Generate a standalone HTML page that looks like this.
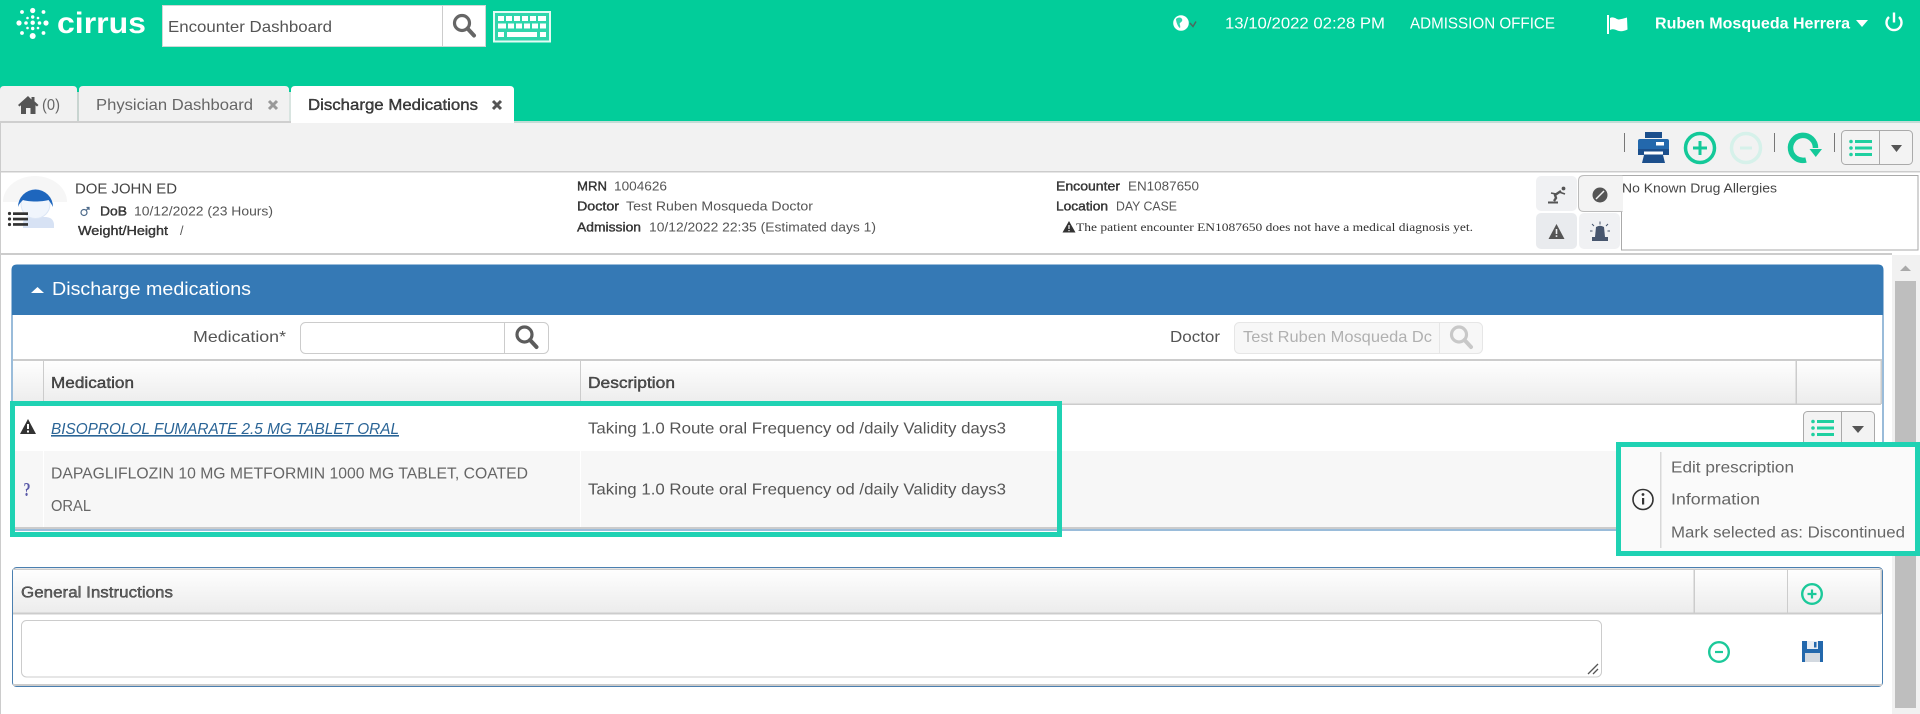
<!DOCTYPE html>
<html lang="en">
<head>
<meta charset="utf-8">
<title>Discharge Medications</title>
<style>
html,body{margin:0;padding:0;width:1920px;height:714px;overflow:hidden;background:#fff}
svg{display:block;font-family:"Liberation Sans",sans-serif}
.sb{stroke:currentColor;stroke-width:.3px}
</style>
</head>
<body>
<svg width="1920" height="714" viewBox="0 0 1920 714" xmlns="http://www.w3.org/2000/svg">
<defs>
<linearGradient id="hd" x1="0" y1="0" x2="0" y2="1"><stop offset="0" stop-color="#fefefe"/><stop offset="1" stop-color="#ececec"/></linearGradient>
<g id="lst"><circle cx="-11" cy="-6.5" r="1.8"/><circle cx="-11" cy="0" r="1.8"/><circle cx="-11" cy="6.5" r="1.8"/><rect x="-7" y="-8" width="17" height="3"/><rect x="-7" y="-1.500" width="17" height="3"/><rect x="-7" y="5" width="17" height="3"/></g>
<g id="mag" fill="none" stroke-width="3.2"><circle cx="-2" cy="-2.500" r="7.500"/><path d="M3.500 3 L10 10" stroke-width="4" stroke-linecap="round"/></g>
</defs>

<!-- header -->
<rect width="1920" height="121" fill="#02cd9a"/>
<g fill="#fff">
<circle cx="32.700" cy="22.700" r="2.200"/>
<circle cx="32.700" cy="10.500" r="2.600"/><circle cx="32.700" cy="17" r="1.700"/><circle cx="32.700" cy="28.500" r="1.700"/><circle cx="32.700" cy="36" r="3"/>
<circle cx="19" cy="23" r="2.600"/><circle cx="26" cy="23" r="1.800"/><circle cx="39.500" cy="23" r="1.800"/><circle cx="46" cy="23" r="2.600"/>
<circle cx="22" cy="12" r="1.900"/><circle cx="27.500" cy="18" r="1.300"/><circle cx="43.500" cy="12" r="1.900"/><circle cx="38" cy="18" r="1.300"/>
<circle cx="22" cy="33" r="1.900"/><circle cx="27.500" cy="28" r="1.300"/><circle cx="43.500" cy="33" r="1.900"/><circle cx="38" cy="28" r="1.300"/>
<text x="57" y="33" font-size="30" font-weight="bold" textLength="89" lengthAdjust="spacingAndGlyphs">cirrus</text>
</g>
<rect x="162.500" y="5.500" width="323" height="41" fill="#fff" stroke="#cfd8d5"/>
<line x1="442.500" y1="6" x2="442.500" y2="46" stroke="#ccc"/>
<text x="168" y="32" font-size="16" fill="#555" textLength="164" lengthAdjust="spacingAndGlyphs">Encounter Dashboard</text>
<use href="#mag" x="464" y="25.500" stroke="#666"/>
<rect x="494" y="12" width="56" height="29.500" fill="#2fd6ac" stroke="#e3fbf4" stroke-width="2"/>
<g fill="#fff">
<rect x="498" y="16" width="6" height="5"/><rect x="506" y="16" width="6" height="5"/><rect x="514" y="16" width="6" height="5"/><rect x="522" y="16" width="6" height="5"/><rect x="530" y="16" width="6" height="5"/><rect x="538" y="16" width="8" height="5"/>
<rect x="498" y="23.500" width="8" height="5"/><rect x="508" y="23.500" width="6" height="5"/><rect x="516" y="23.500" width="6" height="5"/><rect x="524" y="23.500" width="6" height="5"/><rect x="532" y="23.500" width="6" height="5"/><rect x="540" y="23.500" width="6" height="5"/>
<rect x="498" y="32" width="6" height="5"/><rect x="507" y="32" width="30" height="5"/><rect x="540" y="32" width="6" height="5"/>
</g>
<!-- globe -->
<circle cx="1181" cy="23" r="7.800" fill="#fff"/>
<path d="M1176 19c2-2 5-2 6 0s-1 3-2 4 1 3 0 5c-2-1-4-6-4-9z" fill="#2fd6ac"/>
<path d="M1190 23l3 3.500 3-5" fill="none" stroke="#4a6b60" stroke-width="1.500"/>
<g fill="#fff" font-size="15.500">
<text x="1225" y="28.500" textLength="160" lengthAdjust="spacingAndGlyphs">13/10/2022 02:28 PM</text>
<text x="1410" y="28.500" textLength="145" lengthAdjust="spacingAndGlyphs">ADMISSION OFFICE</text>
<text x="1655" y="28.500" font-weight="bold" textLength="195" lengthAdjust="spacingAndGlyphs">Ruben Mosqueda Herrera</text>
</g>
<rect x="1607" y="15" width="2" height="19" fill="#fff"/>
<path d="M1610 18c4-2 7 2 9 1.500s5-1 8-2l.5 12c-3 1.500-6 2-8.500 1.500s-5-3-9-1z" fill="#fff"/>
<path d="M1856 20h12l-6 7z" fill="#fff"/>
<path d="M1889 17a7.500 7.500 0 1 0 10 0" fill="none" stroke="#fff" stroke-width="2.400"/>
<rect x="1892.800" y="12.500" width="2.400" height="10" fill="#fff"/>

<!-- tabs -->
<rect x="76" y="92" width="4" height="30" fill="#c8d4d0"/>
<rect x="288" y="92" width="4" height="30" fill="#d8e4e0"/>
<path d="M0 122V90q0-4 4-4h69q4 0 4 4v32z" fill="#f1f1f1"/>
<path d="M79 122V90q0-4 4-4h202q4 0 4 4v32z" fill="#f1f1f1"/>
<path d="M291 122V90q0-4 4-4h215q4 0 4 4v32z" fill="#fff"/>
<path d="M28 96L18 105l1.500 1.500 1.500-1.300V114h5v-6h4.500v6h5v-8.800l1.500 1.300 1.500-1.500-4-3.800V97h-3v2.500z" fill="#555"/>
<text x="42" y="110" font-size="16" fill="#666" textLength="18" lengthAdjust="spacingAndGlyphs">(0)</text>
<text x="96" y="110" font-size="16" fill="#666" textLength="157" lengthAdjust="spacingAndGlyphs">Physician Dashboard</text>
<path d="M269 101l8 8m0-8l-8 8" stroke="#999" stroke-width="3"/>
<text x="308" y="110" font-size="16" fill="#444" class="sb" textLength="170" lengthAdjust="spacingAndGlyphs">Discharge Medications</text>
<path d="M493 101l8 8m0-8l-8 8" stroke="#555" stroke-width="3"/>

<!-- toolbar -->
<rect x="0" y="122" width="1920" height="50" fill="#f2f2f2"/>
<rect x="291" y="121" width="223" height="2" fill="#fff"/>
<rect x="0" y="121" width="291" height="2" fill="#cfcfcf"/>
<rect x="514" y="121" width="1406" height="2" fill="#c3dcd6"/>
<rect x="0" y="171" width="1920" height="1.500" fill="#ccc"/>
<rect x="1624" y="133" width="1" height="19" fill="#777"/>
<rect x="1774" y="133" width="1" height="19" fill="#777"/>
<rect x="1834" y="133" width="1" height="19" fill="#777"/>
<!-- printer -->
<rect x="1645" y="132" width="17" height="6" fill="#1c4f8c"/>
<rect x="1638" y="139" width="31" height="16" rx="2" fill="#2368ac"/>
<rect x="1638" y="149" width="31" height="6" fill="#1c4f8c"/>
<rect x="1656" y="142" width="8" height="3.500" fill="#fff"/>
<path d="M1644 155h19l2 8h-23z" fill="#1c4f8c"/><rect x="1644" y="151.500" width="19" height="3" fill="#fff"/>
<!-- plus / minus / refresh -->
<g fill="none" stroke-width="3.500">
<circle cx="1700" cy="148" r="14.500" stroke="#14c999"/>
<path d="M1693 148h14M1700 141v14" stroke="#14c999" stroke-width="3"/>
<circle cx="1746" cy="148" r="14.500" stroke="#d6f1ea"/>
<path d="M1740 148h12" stroke="#d6f1ea" stroke-width="3"/>
<path d="M1806 160A12.500 12.500 0 1 1 1815.500 148" stroke="#14c999" stroke-width="5.500"/>
</g>
<path d="M1809.500 149h12.500l-6.250 8z" fill="#14c999"/>
<!-- split button -->
<rect x="1841.500" y="130.500" width="71" height="34" rx="4" fill="#f3f3f3" stroke="#aaa"/>
<line x1="1879.500" y1="131" x2="1879.500" y2="164" stroke="#aaa"/>
<use href="#lst" x="1862" y="148" fill="#1fd0a0"/>
<path d="M1891 145h11l-5.500 7z" fill="#555"/>

<!-- patient band -->
<rect x="0" y="172.500" width="1920" height="81" fill="#fff"/>
<rect x="0" y="253" width="1892" height="2" fill="#ccc"/>
<path d="M3 202A32 26 0 0 1 67 202z" fill="#f6f6f6"/>
<path d="M23 228v-6q2-5 8-5h14q8 0 9 7v4z" fill="#d7e2f4"/>
<circle cx="35.500" cy="204" r="14.500" fill="#f0f5fc" stroke="#dce6f5"/>
<path d="M18 207A17.500 17.500 0 0 1 53 207C51.500 204 50 202 48.500 200C42 202 29 202 23 200C21 202 19 204 18 207z" fill="#1e66bd"/>
<g fill="#333"><circle cx="9.500" cy="213.500" r="1.600"/><circle cx="9.500" cy="219" r="1.600"/><circle cx="9.500" cy="224.500" r="1.600"/><rect x="13" y="212.300" width="15" height="2.700"/><rect x="13" y="217.700" width="15" height="2.700"/><rect x="13" y="223.100" width="15" height="2.700"/></g>
<text x="75" y="193.500" font-size="15" fill="#444" textLength="102" lengthAdjust="spacingAndGlyphs">DOE JOHN ED</text>
<g fill="none" stroke="#4d6a8a" stroke-width="1.200"><circle cx="84" cy="212.500" r="3"/><path d="M86 210.500l3-3m-2.500 0H89v2.500"/></g>
<g font-size="13" fill="#444">
<text x="100" y="215.500" class="sb" textLength="27" lengthAdjust="spacingAndGlyphs">DoB</text>
<text x="78" y="235" class="sb" textLength="90" lengthAdjust="spacingAndGlyphs">Weight/Height</text>
<text x="577" y="190.500" class="sb" textLength="30" lengthAdjust="spacingAndGlyphs">MRN</text>
<text x="577" y="210.500" class="sb" textLength="42" lengthAdjust="spacingAndGlyphs">Doctor</text>
<text x="577" y="231.500" class="sb" textLength="64" lengthAdjust="spacingAndGlyphs">Admission</text>
<text x="1056" y="190.500" class="sb" textLength="64" lengthAdjust="spacingAndGlyphs">Encounter</text>
<text x="1056" y="210.500" class="sb" textLength="52" lengthAdjust="spacingAndGlyphs">Location</text>
</g>
<g font-size="12.500" fill="#555">
<text x="134" y="215.500" textLength="139" lengthAdjust="spacingAndGlyphs">10/12/2022 (23 Hours)</text>
<text x="180" y="235">/</text>
<text x="614" y="190.500" textLength="53" lengthAdjust="spacingAndGlyphs">1004626</text>
<text x="626" y="210.500" textLength="187" lengthAdjust="spacingAndGlyphs">Test Ruben Mosqueda Doctor</text>
<text x="649" y="231.500" textLength="227" lengthAdjust="spacingAndGlyphs">10/12/2022 22:35 (Estimated days 1)</text>
<text x="1128" y="190.500" textLength="71" lengthAdjust="spacingAndGlyphs">EN1087650</text>
<text x="1116" y="210.500" textLength="61" lengthAdjust="spacingAndGlyphs">DAY CASE</text>
</g>
<path d="M1069 221l6.500 11.500h-13z" fill="#333"/><rect x="1068.400" y="225" width="1.200" height="4" fill="#fff"/><rect x="1068.400" y="230" width="1.200" height="1.200" fill="#fff"/>
<text x="1076" y="231" font-size="12" fill="#333" style="font-family:'Liberation Serif',serif" textLength="397" lengthAdjust="spacingAndGlyphs">The patient encounter EN1087650 does not have a medical diagnosis yet.</text>

<!-- alert tiles -->
<rect x="1621.500" y="175.500" width="296.500" height="74.500" fill="#fff" stroke="#aaa"/>
<rect x="1536" y="176" width="41" height="35" rx="5" fill="#f0f1f3"/>
<rect x="1536" y="213" width="41" height="36" rx="5" fill="#e9ebee"/>
<rect x="1579" y="213" width="41" height="36" rx="5" fill="#f0f1f3"/>
<path d="M1622 175.500h-38q-5.500 0-5.500 5.500v25q0 5.500 5.500 5.500h38z" fill="#f3f3f3" stroke="#bbb"/>
<rect x="1620" y="176" width="3" height="35" fill="#f3f3f3"/>
<!-- falling person -->
<circle cx="1563.500" cy="188.500" r="1.900" fill="#555"/>
<path d="M1561 191l-6 4 1 3-2 3" fill="none" stroke="#555" stroke-width="2.400"/>
<path d="M1556 194l-5-1M1559 192l6 2" fill="none" stroke="#555" stroke-width="1.600"/>
<rect x="1548" y="201.500" width="10" height="2" fill="#555"/>
<circle cx="1600" cy="195" r="7.500" fill="#555"/><path d="M1596 199l8-8" stroke="#f3f3f3" stroke-width="1.500"/>
<path d="M1556.500 224l8 15h-16z" fill="#555"/><rect x="1555.700" y="229" width="1.600" height="5" fill="#f0f1f3"/><rect x="1555.700" y="235.300" width="1.600" height="1.600" fill="#f0f1f3"/>
<path d="M1596 227q4-2.500 8 0l1 10h-10z" fill="#47566e"/><rect x="1592" y="237" width="16" height="4" fill="#47566e"/><path d="M1600 221.500v3M1592 224l2 2M1608 224l-2 2M1590 231h2.500M1607.500 231h2.500" stroke="#47566e"/>
<text x="1622" y="192.500" font-size="13" fill="#444" textLength="155" lengthAdjust="spacingAndGlyphs">No Known Drug Allergies</text>

<!-- scrollbar -->
<rect x="1892" y="255" width="28" height="459" fill="#f1f1f1"/>
<rect x="1895" y="281" width="21" height="427" fill="#bebebe"/>
<path d="M1905.500 265.500l5.500 5.500h-11z" fill="#a9a9a9"/>
<rect x="0" y="123" width="1" height="591" fill="#ccc"/>

<!-- main panel -->
<path d="M12 530V270q0-5 5-5h1861q5 0 5 5v260z" fill="#fff" stroke="#3579b5" stroke-width="1"/>
<path d="M12 315V270q0-5 5-5h1861q5 0 5 5v45z" fill="#3579b5"/>
<path d="M31 293l6.500-6 6.500 6z" fill="#fff"/>
<text x="52" y="295" font-size="18.500" fill="#fff" textLength="199" lengthAdjust="spacingAndGlyphs">Discharge medications</text>
<text x="193" y="342" font-size="16" fill="#555" textLength="93" lengthAdjust="spacingAndGlyphs">Medication*</text>
<rect x="300.500" y="322.500" width="248" height="31" rx="5" fill="#fff" stroke="#ccc"/>
<line x1="504.500" y1="323" x2="504.500" y2="353" stroke="#ccc"/>
<use href="#mag" x="526.500" y="337" stroke="#5c5c5c"/>
<text x="1170" y="342" font-size="16" fill="#555" textLength="50" lengthAdjust="spacingAndGlyphs">Doctor</text>
<rect x="1234.500" y="322.500" width="248" height="31" rx="5" fill="#f7f7f7" stroke="#e6e6e6"/>
<line x1="1439.500" y1="323" x2="1439.500" y2="353" stroke="#e6e6e6"/>
<text x="1243" y="342" font-size="16" fill="#b0b0b0" textLength="189" lengthAdjust="spacingAndGlyphs">Test Ruben Mosqueda Dc</text>
<use href="#mag" x="1461" y="337" stroke="#c8c8c8"/>

<!-- table -->
<rect x="13" y="359" width="1869" height="2" fill="#ccc"/>
<rect x="13" y="361" width="1868" height="43" fill="url(#hd)"/>
<rect x="13" y="403.500" width="1868" height="1.500" fill="#ccc"/>
<rect x="43" y="361" width="1" height="43" fill="#ccc"/>
<rect x="580" y="361" width="1" height="43" fill="#ccc"/>
<rect x="1795.500" y="361" width="1.500" height="43" fill="#ccc"/>
<rect x="1880.500" y="361" width="1.500" height="43" fill="#ccc"/>
<text x="51" y="388" font-size="16" fill="#555" class="sb" textLength="83" lengthAdjust="spacingAndGlyphs">Medication</text>
<text x="588" y="388" font-size="16" fill="#555" class="sb" textLength="87" lengthAdjust="spacingAndGlyphs">Description</text>
<rect x="13" y="451" width="1869" height="76" fill="#f7f7f7"/>
<rect x="43" y="451" width="1" height="76" fill="#fff"/>
<rect x="580" y="451" width="1" height="76" fill="#fff"/>
<rect x="13" y="527" width="1869" height="2" fill="#ccc"/>
<path d="M28 419l8 15H20z" fill="#333"/><rect x="27" y="424" width="2" height="5" fill="#fff"/><rect x="27" y="430.500" width="2" height="2" fill="#fff"/>
<text x="51" y="434" font-size="16" font-style="italic" fill="#2a6496" text-decoration="underline" textLength="348" lengthAdjust="spacingAndGlyphs">BISOPROLOL FUMARATE 2.5 MG TABLET ORAL</text>
<text x="23.500" y="496" font-size="20" font-weight="bold" fill="#5a5aa8" style="font-family:'Liberation Serif',serif" textLength="7" lengthAdjust="spacingAndGlyphs">?</text>
<text x="51" y="478.500" font-size="16" fill="#666" textLength="477" lengthAdjust="spacingAndGlyphs">DAPAGLIFLOZIN 10 MG METFORMIN 1000 MG TABLET, COATED</text>
<text x="51" y="511" font-size="16" fill="#666" textLength="40" lengthAdjust="spacingAndGlyphs">ORAL</text>
<text x="588" y="433.500" font-size="16" fill="#555" textLength="418" lengthAdjust="spacingAndGlyphs">Taking 1.0 Route oral Frequency od /daily Validity days3</text>
<text x="588" y="494.500" font-size="16" fill="#555" textLength="418" lengthAdjust="spacingAndGlyphs">Taking 1.0 Route oral Frequency od /daily Validity days3</text>
<rect x="1803.500" y="411.500" width="71" height="34" rx="4" fill="#f3f3f3" stroke="#aaa"/>
<line x1="1841.500" y1="412" x2="1841.500" y2="445" stroke="#aaa"/>
<use href="#lst" x="1824" y="428" fill="#1fd0a0"/>
<path d="M1852 426h12l-6 7z" fill="#555"/>

<!-- highlight boxes -->
<rect x="12.500" y="403.500" width="1047" height="131" fill="none" stroke="#1fd2b3" stroke-width="5"/>
<rect x="1618.500" y="444.500" width="299" height="109" fill="#fafafa" stroke="#1fd2b3" stroke-width="5"/>
<rect x="1660" y="452" width="1.500" height="96" fill="#d8d8d8"/>
<circle cx="1643" cy="499.500" r="10" fill="none" stroke="#333" stroke-width="1.600"/>
<rect x="1642" y="498" width="2.200" height="6.500" fill="#333"/><circle cx="1643" cy="494.500" r="1.400" fill="#333"/>
<g font-size="15.500" fill="#666">
<text x="1671" y="472.500" textLength="123" lengthAdjust="spacingAndGlyphs">Edit prescription</text>
<text x="1671" y="504.500" textLength="89" lengthAdjust="spacingAndGlyphs">Information</text>
<text x="1671" y="537.500" textLength="234" lengthAdjust="spacingAndGlyphs">Mark selected as: Discontinued</text>
</g>

<!-- general instructions -->
<rect x="12.500" y="567.500" width="1870" height="119" rx="4" fill="#fff" stroke="#4a7fb0"/>
<rect x="13" y="568.500" width="1868" height="1.500" fill="#ccc"/>
<rect x="13" y="570" width="1868" height="43" fill="url(#hd)"/>
<rect x="13" y="612.500" width="1868" height="2" fill="#ccc"/>
<rect x="1693.500" y="569" width="1.500" height="44" fill="#ccc"/>
<rect x="1787" y="569" width="1" height="44" fill="#ccc"/>
<rect x="1880.500" y="569" width="1.500" height="45" fill="#ccc"/>
<rect x="13" y="684" width="1869" height="2" fill="#ccc"/>
<text x="21" y="597.500" font-size="16" fill="#666" class="sb" textLength="152" lengthAdjust="spacingAndGlyphs">General Instructions</text>
<rect x="21.500" y="620.500" width="1580" height="56.500" rx="5" fill="#fff" stroke="#ccc"/>
<path d="M1588 674l10-10M1593 674l5-5" stroke="#555" stroke-width="1.300"/>
<circle cx="1812" cy="594" r="9.800" fill="none" stroke="#1cc99a" stroke-width="2.400"/>
<path d="M1807.500 594h9M1812 589.500v9" stroke="#1cc99a" stroke-width="2.200"/>
<circle cx="1719" cy="652" r="9.800" fill="none" stroke="#1cc99a" stroke-width="2.400"/>
<path d="M1715 652h8" stroke="#1cc99a" stroke-width="2.200"/>
<rect x="1802" y="641" width="21" height="21" fill="#2368ac"/>
<rect x="1807" y="641" width="11" height="8" fill="#e8edf3"/><rect x="1814" y="642" width="2.500" height="5.500" fill="#2368ac"/>
<rect x="1805" y="653" width="15" height="9" fill="#d3d9e0"/>
</svg>
</body>
</html>
